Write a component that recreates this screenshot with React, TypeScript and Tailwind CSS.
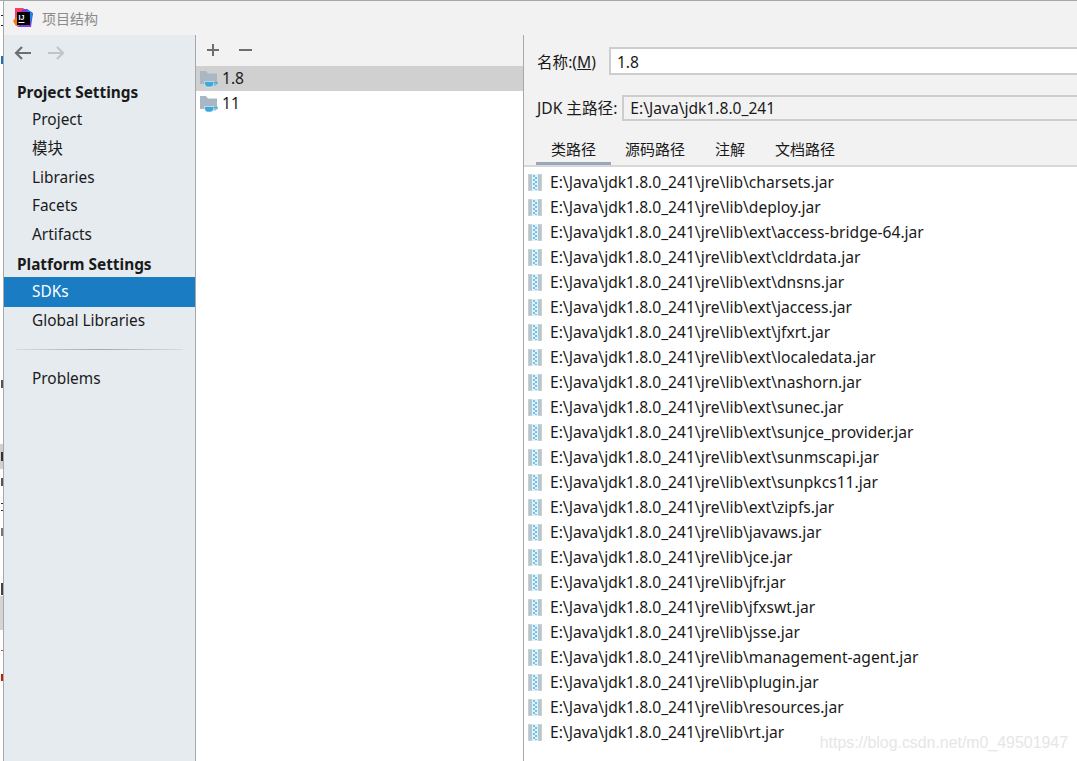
const font = { fontFamily: '"Noto Sans", "Noto Sans CJK SC", sans-serif' };

const jars = [
  "charsets.jar", "deploy.jar", "ext\\access-bridge-64.jar", "ext\\cldrdata.jar", "ext\\dnsns.jar",
  "ext\\jaccess.jar", "ext\\jfxrt.jar", "ext\\localedata.jar", "ext\\nashorn.jar", "ext\\sunec.jar",
  "ext\\sunjce_provider.jar", "ext\\sunmscapi.jar", "ext\\sunpkcs11.jar", "ext\\zipfs.jar", "javaws.jar",
  "jce.jar", "jfr.jar", "jfxswt.jar", "jsse.jar", "management-agent.jar", "plugin.jar", "resources.jar", "rt.jar",
];

function JarIcon() {
  return (
    <svg width="14" height="17" viewBox="0 0 14 17" className="shrink-0">
      <rect x="0" y="0" width="14" height="17" fill="#c6d0d5" />
      <rect x="1" y="1" width="3" height="15" fill="#b7c5cc" />
      <rect x="10" y="1" width="3" height="15" fill="#b7c5cc" />
      <rect x="4" y="0" width="6" height="17" fill="#e2f2fa" />
      <path d="M5 1h2v2H5zM7 3h2v2H7zM5 5h2v2H5zM7 7h2v2H7zM5 9h2v2H5zM7 11h2v2H7zM5 13h2v2H5zM7 15h2v1H7z" fill="#6cc2e8" />
    </svg>
  );
}

function SdkIcon() {
  return (
    <svg width="20" height="20" viewBox="0 0 20 20" className="shrink-0">
      <path d="M1 2h6l2 2.500h9V15H1z" fill="#a9b7c3" />
      <path d="M5.500 12.500h9.500c0 3-1 5-3 5.500H8c-2-.5-2.500-2.500-2.500-5.500z" fill="#3ea8de" stroke="#f2f2f2" strokeWidth="0.6" />
      <path d="M15 13.500h3.500c0 1.500-1.500 2.500-3.800 2.500" fill="none" stroke="#3ea8de" strokeWidth="1" />
    </svg>
  );
}

function NavItem({ label, active, y }: { label: string; active?: boolean; y: string }) {
  return (
    <div className={`${y} flex shrink-0 items-center pl-7 text-[15.4px] ${active ? "bg-[#1a7dc4] text-white" : "text-[#1a1a1a]"}`}>
      {label}
    </div>
  );
}

function Frag({ h, mark, bg }: { h: string; mark?: string; bg?: string }) {
  return (
    <div className={`${h} ${bg ?? ""} flex shrink-0 items-center justify-end`}>
      {mark ? <div className={mark} /> : null}
    </div>
  );
}

export default function App() {
  return (
    <div style={font} className="flex h-[761px] w-[1077px] overflow-hidden bg-white text-[15.6px] text-[#1a1a1a]">
      <div className="flex h-full w-[3px] shrink-0 flex-col overflow-hidden border-t border-[#a8a8a8]">
        <Frag h="h-[12px]" />
        <Frag h="h-[14px]" mark="h-[11px] w-[2px] border-y border-[#222]" />
        <Frag h="h-[27px]" />
        <Frag h="h-[12px]" mark="h-[8px] w-[2px] bg-[#1d6fc0]" />
        <Frag h="h-[310px]" />
        <Frag h="h-[16px]" mark="h-[8px] w-[2px] bg-[#555]" />
        <Frag h="h-[52px]" />
        <Frag h="h-[25px]" mark="h-[9px] w-[2px] bg-[#333]" bg="bg-[#d0d0d0]" />
        <Frag h="h-[25px]" mark="h-[8px] w-[2px] bg-[#555]" />
        <Frag h="h-[25px]" mark="h-[8px] w-[2px] border-y border-[#333]" />
        <Frag h="h-[25px]" mark="h-[8px] w-[2px] bg-[#777]" />
        <Frag h="h-[38px]" />
        <Frag h="h-[14px]" mark="h-[12px] w-[2px] bg-[#444]" />
        <Frag h="h-[34px]" bg="bg-[#d4d4d4]" />
        <Frag h="h-[16px]" />
        <Frag h="h-[8px]" mark="h-px w-[2px] bg-[#c05020]" />
        <Frag h="h-[16px]" />
        <Frag h="h-[14px]" mark="h-[7px] w-[2px] bg-[#c02000]" />
      </div>
      <div className="flex h-full min-w-0 flex-1 flex-col border-l border-[#a8a8a8]">
        <div className="flex h-[35px] shrink-0 items-center gap-[8px] border-t border-[#a8a8a8] bg-[#f2f2f2] pl-[8px]">
          <svg width="22" height="22" viewBox="0 0 22 22" className="shrink-0">
            <path d="M4 2h11l6 4-2 14H6l-4-5 2-6z" fill="#7c3fe0" />
            <path d="M1 14l4-5 2 10H4z" fill="#f97a12" />
            <path d="M3 1h9L3 12z" fill="#fc3c6a" />
            <path d="M15 2l6 5-3 9z" fill="#0b8ef0" />
            <rect x="5" y="5" width="13" height="13" fill="#000" />
            <rect x="6.500" y="15" width="6" height="1" fill="#fff" />
            <text x="6.500" y="13" fontSize="7" fontWeight="700" fill="#fff" fontFamily="Liberation Sans">IJ</text>
          </svg>
          <span className="text-[14px] text-[#8a8a8a]">项目结构</span>
        </div>
        <div className="flex min-h-0 flex-1">
          <div className="flex h-full w-[192px] shrink-0 flex-col border-r border-[#a8a8a8] bg-[#e6ebf0] text-[15.4px]">
            <div className="flex h-[36px] shrink-0 items-center gap-[13px] pl-[9px]">
              <svg width="20" height="16" viewBox="0 0 20 16"><path d="M18 8H3M9 2L3 8l6 6" fill="none" stroke="#6e6e6e" strokeWidth="2.200" /></svg>
              <svg width="20" height="16" viewBox="0 0 20 16"><path d="M2 8h15M11 2l6 6-6 6" fill="none" stroke="#c4c4c4" strokeWidth="2.200" /></svg>
            </div>
            <div className="mt-[8px] flex h-[28px] shrink-0 items-center pl-[13px] font-bold">Project Settings</div>
            <NavItem label="Project" y="h-[26px]" />
            <NavItem label="模块" y="h-[29px] mt-[1px]" />
            <NavItem label="Libraries" y="h-[29px]" />
            <NavItem label="Facets" y="h-[28px]" />
            <NavItem label="Artifacts" y="h-[29px]" />
            <div className="flex h-[30px] shrink-0 items-center pl-[13px] pt-[2px] font-bold">Platform Settings</div>
            <NavItem label="SDKs" active y="h-[30px] -mt-[2px]" />
            <NavItem label="Global Libraries" y="h-[28px]" />
            <div className="mx-[12px] mt-[14px] h-px bg-gradient-to-r from-[#d8dcdf] via-[#a8a8a8] to-[#d8dcdf]" />
            <NavItem label="Problems" y="h-[29px] mt-[14px]" />
          </div>
          <div className="flex h-full w-[328px] shrink-0 flex-col border-r border-[#a8a8a8] bg-white">
            <div className="flex h-[31px] shrink-0 items-center gap-[18px] bg-[#f2f2f2] pl-[10px] pb-[2px]">
              <svg width="14" height="14" viewBox="0 0 14 14"><path d="M7 1v12M1 7h12" stroke="#6e6e6e" strokeWidth="2" /></svg>
              <svg width="14" height="14" viewBox="0 0 14 14"><path d="M1 7h13" stroke="#6e6e6e" strokeWidth="2" /></svg>
            </div>
            <div className="flex h-[25px] items-center gap-[3px] bg-[#d0d0d0] pl-[3px]"><SdkIcon /><span>1.8</span></div>
            <div className="flex h-[25px] items-center gap-[3px] pl-[3px]"><SdkIcon /><span>11</span></div>
          </div>
          <div className="relative flex h-full min-w-0 flex-1 flex-col overflow-hidden">
            <div className="flex h-[132px] shrink-0 flex-col border-b-2 border-[#d8d8d8] bg-[#f2f2f2] pl-[13px]">
              <div className="mt-[12px] flex h-[28px] items-center gap-[13px]">
                <span className="whitespace-nowrap pt-[3px]">名称:(<span className="underline">M</span>)</span>
                <div className="flex h-[28px] flex-1 items-center border-2 border-r-0 border-[#cdcdcd] bg-white pl-[6px] pt-[3px]">1.8</div>
              </div>
              <div className="mt-[20px] flex h-[26px] items-center gap-[5px]">
                <span className="whitespace-nowrap pt-[2px]">JDK 主路径:</span>
                <div className="flex h-[26px] flex-1 items-center border-2 border-r-0 border-[#cdcdcd] pl-[6px] pt-[2px]">E:\Java\jdk1.8.0_241</div>
              </div>
              <div className="-ml-[1px] mt-[13px] flex h-[31px] items-center text-[15px]">
                <div className="flex h-[31px] w-[75px] items-center justify-center border-b-[3px] border-[#9aa8bc] pt-[2px]">类路径</div>
                <div className="ml-[14px] pb-[1px]">源码路径</div>
                <div className="ml-[30px] pb-[1px]">注解</div>
                <div className="ml-[30px] pb-[1px]">文档路径</div>
              </div>
            </div>
            <div className="flex flex-col pl-[4px] pt-[3px]">
              {jars.map((j) => (
                <div key={j} className="flex h-[25px] items-center gap-[8px] whitespace-nowrap">
                  <JarIcon />
                  <span>{"E:\\Java\\jdk1.8.0_241\\jre\\lib\\" + j}</span>
                </div>
              ))}
            </div>
            <div className="absolute bottom-[6px] right-[9px] text-[15.9px] text-[#e6e6e6]" style={{ fontFamily: '"Liberation Sans", sans-serif' }}>
              https://blog.csdn.net/m0_49501947
            </div>
          </div>
        </div>
      </div>
    </div>
  );
}
